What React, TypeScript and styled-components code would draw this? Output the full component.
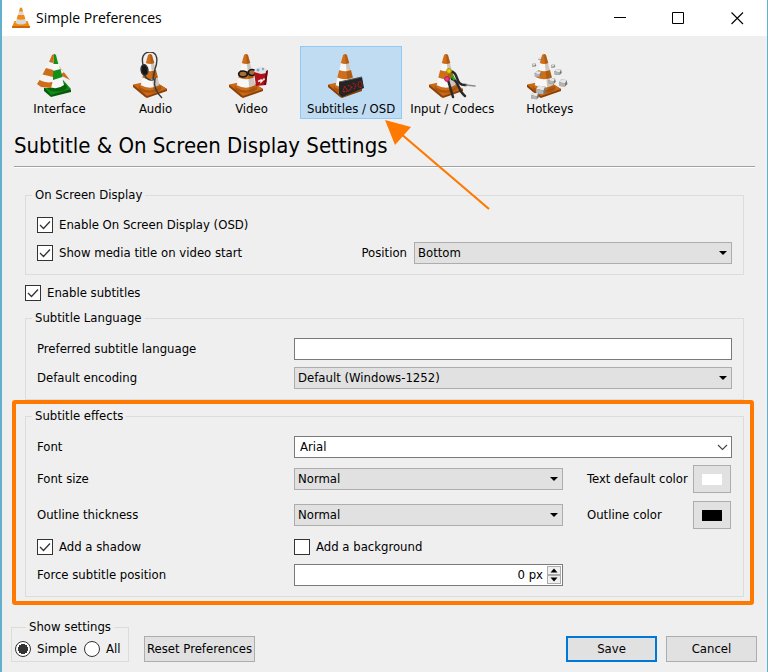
import React, { useState } from 'react';
import styled, { createGlobalStyle, css } from 'styled-components';

const UI_FONT = '"DejaVu Sans Condensed", "DejaVu Sans", Tahoma, sans-serif';
const HIGHLIGHT = '#ff7800';

const GlobalStyle = createGlobalStyle`
  *, *::before, *::after { box-sizing: border-box; }
  body {
    margin: 0;
    background: #efefef;
    color: #000;
    font-family: ${UI_FONT};
    font-size: 13px;
    line-height: 18px;
  }
  button, input, select { font: inherit; color: inherit; margin: 0; }
`;

const Window = styled.main`
  display: flex;
  flex-direction: column;
  min-height: 100vh;
  background: #efefef;
  border-left: 2px solid #62b0cb;
  border-right: 1px solid #62b0cb;
`;

const TitleBar = styled.header`
  display: flex;
  align-items: center;
  height: 36px;
  padding-left: 9px;
  background: #fff;
`;

const WindowTitle = styled.span`
  flex: 1;
  margin-left: 5px;
  font-family: 'Open Sans', 'Noto Sans', sans-serif;
  font-size: 14px;
  line-height: 20px;
`;

const CaptionButton = styled.button`
  display: flex;
  align-items: center;
  justify-content: center;
  width: 59px;
  height: 34px;
  padding: 0;
  border: 0;
  background: transparent;
`;

const Tabs = styled.nav`
  display: flex;
  gap: 1px;
  margin: 10px 10px 0;
`;

const TabSlot = styled.div`
  position: relative;
`;

const Tab = styled.button<{ $active?: boolean }>`
  display: flex;
  flex-direction: column;
  align-items: center;
  min-width: 95px;
  height: 73px;
  padding: 5px 6px 0;
  border: 1px solid transparent;
  background: transparent;
  line-height: 17px;
  white-space: nowrap;
  ${(p) => p.$active && css`
    background: #c0dcf3;
    border-color: #90c8f6;
  `}
`;

const Pointer = styled.svg`
  position: absolute;
  left: 80px;
  top: 70px;
  z-index: 2;
  pointer-events: none;
`;

const Heading = styled.h1`
  margin: 10px 12px 0;
  padding-bottom: 3px;
  border-bottom: 1px solid #a0a0a0;
  box-shadow: 0 1px 0 #fff;
  font-size: 22px;
  font-weight: 400;
  line-height: 34px;
`;

const Panel = styled.section`
  padding: 0 23px;
`;

const Group = styled.fieldset<{ $top?: number }>`
  min-width: 0;
  margin: 0;
  padding: ${(p) => p.$top ?? 11}px 11px 10px;
  border: 1px solid #dcdcdc;
`;

const Legend = styled.legend`
  margin-left: -5px;
  padding: 0 3px;
  line-height: 18px;
`;

const OsdGroup = styled(Group)`
  margin-top: 19px;
`;

const Rows = styled.div<{ $gap: number }>`
  display: flex;
  flex-direction: column;
  gap: ${(p) => p.$gap}px;
`;

const Row = styled.div`
  display: flex;
  align-items: center;
  justify-content: space-between;
  min-height: 22px;
`;

const FormRow = styled.div<{ $tall?: boolean }>`
  display: grid;
  grid-template-columns: 257px minmax(0, 1fr);
  align-items: center;
  min-height: ${(p) => (p.$tall ? 30 : 22)}px;
`;

const EffectRow = styled(FormRow)`
  grid-template-columns: 257px minmax(0, 1fr) 24px 106px 39px;
`;

const ColorLabel = styled.span`
  grid-column: 4;
  white-space: nowrap;
`;

const CheckLabel = styled.label`
  display: inline-flex;
  align-items: center;
  gap: 6px;
  min-height: 22px;
  white-space: nowrap;
`;

const SubtitlesToggle = styled.div`
  display: flex;
  padding: 7px 0 5px;
`;

const TickWrap = styled.span`
  display: grid;
  width: 16px;
  height: 16px;
  & > * { grid-area: 1 / 1; }
  svg { pointer-events: none; }
  input:not(:checked) + svg { visibility: hidden; }
`;

const Tick = styled.input`
  appearance: none;
  width: 16px;
  height: 16px;
  border: 1px solid #333;
  background: #fff;
`;

const Radio = styled.input`
  appearance: none;
  width: 16px;
  height: 16px;
  border: 1px solid #333;
  border-radius: 50%;
  background: #fff;
  &:checked { background: radial-gradient(circle, #333 0 5px, #fff 5px); }
`;

const PositionField = styled.label`
  display: flex;
  align-items: center;
  gap: 7px;
`;

const SelectWrap = styled.span<{ $width?: string }>`
  display: grid;
  align-items: center;
  width: ${(p) => p.$width ?? '100%'};
  & > * { grid-area: 1 / 1; }
  svg {
    justify-self: end;
    margin-right: 4px;
    pointer-events: none;
  }
`;

const Drop = styled.select<{ $light?: boolean }>`
  appearance: none;
  width: 100%;
  height: 22px;
  padding: 0 20px 0 ${(p) => (p.$light ? 5 : 3)}px;
  border: 1px solid ${(p) => (p.$light ? '#7a7a7a' : '#adadad')};
  border-radius: 0;
  background: ${(p) => (p.$light ? '#fff' : '#e1e1e1')};
`;

const TextInput = styled.input`
  width: 100%;
  height: 22px;
  padding: 0 4px;
  border: 1px solid #7a7a7a;
  background: #fff;
`;

const Spin = styled.div`
  display: flex;
  height: 22px;
  padding: 1px;
  border: 1px solid #7a7a7a;
  background: #fff;
`;

const SpinInput = styled.input`
  flex: 1;
  min-width: 0;
  padding: 0 4px;
  border: 0;
  background: transparent;
  text-align: right;
`;

const SpinButtons = styled.div`
  display: grid;
  grid-template-rows: 1fr 1fr;
  width: 14px;
`;

const SpinButton = styled.button`
  display: flex;
  align-items: center;
  justify-content: center;
  padding: 0;
  border: 1px solid #adadad;
  background: #f0f0f0;
`;

const Highlight = styled.div`
  margin: 0 13px 0 10px;
  padding: 3px 6px 4px 9px;
  border: 4px solid ${HIGHLIGHT};
  border-radius: 3px;
`;

const PushButton = styled.button<{ $primary?: boolean }>`
  height: 26px;
  min-width: 91px;
  padding: 0 2px;
  border: ${(p) => (p.$primary ? '2px solid #0078d7' : '1px solid #adadad')};
  background: #e1e1e1;
  white-space: nowrap;
`;

const ColorButton = styled.button`
  grid-column: 5;
  display: flex;
  align-items: center;
  justify-content: center;
  width: 38px;
  height: 28px;
  padding: 0;
  border: 1px solid #adadad;
  background: #e1e1e1;
`;

const Swatch = styled.span<{ $color: string }>`
  width: 20px;
  height: 11px;
  background: ${(p) => p.$color};
`;

const Footer = styled.footer`
  display: flex;
  align-items: flex-end;
  gap: 9px;
  padding: 13px 10px 10px 9px;
`;

const ShowGroup = styled.fieldset`
  min-width: 118px;
  margin: 0 6px 0 0;
  padding: 2px 3px 1px;
  border: 1px solid #dcdcdc;
`;

const ShowLegend = styled.legend`
  margin: 0 auto;
  padding: 0 3px;
  line-height: 18px;
`;

const RadioRow = styled.div`
  display: flex;
  gap: 7px;
`;

const Spacer = styled.div`
  flex: 1;
`;

const STRIPE = '#cf6e1a';

function ConeBase() {
  return (
    <>
      <path d="M1 33 L22 29 L35 37 V39 L15 46 L13 45 L1 35Z" fill="#8a4109" />
      <path d="M1 32.5 L21 28.5 L35 37 L15 44Z" fill="#cb6a14" />
      <ellipse cx="18" cy="36" rx="11.5" ry="4.8" fill="#9c4c0c" opacity="0.7" />
    </>
  );
}

function ConeBody() {
  return (
    <>
      <path d="M16 3 Q18 1 20 3 L27.5 34 Q18 40 8.5 34Z" fill="#f7f7f7" />
      <path d="M16 3 Q18 1 20 3 L22.3 11 Q18 13 13.8 11Z" fill={STRIPE} />
      <path d="M12.2 18 Q18 20.5 24 18 L26 25.5 Q18 29 10.3 25.5Z" fill={STRIPE} />
      <path d="M8.6 33 Q18 38.5 27.4 33 L28 35.5 Q18 41.5 8 35.5Z" fill={STRIPE} />
      <path d="M18 2 Q19.5 2 20 3 L28 35.5 Q25 38 21.5 38.8Z" fill="#4a2404" opacity="0.24" />
    </>
  );
}

const KEYS: [number, number, number][] = [
  [8, 13, 0.5], [14, 7, 0.35], [27, 14, 0.5], [32, 20, 0.85], [12, 22, 0.8],
  [26, 29, 0.85], [37, 31, 1], [15, 38, 1.2], [9, 44, 0.9],
];

function TabIcon({ kind }: { kind: string }) {
  return (
    <svg width="48" height="48" viewBox="0 0 48 48" aria-hidden="true">
      {kind === 'interface' ? (
        <>
          <path d="M23 14 L34 28 L26 24Z" fill={STRIPE} />
          <path d="M23 15 L28 20 L25 22Z" fill="#fff" />
          <path d="M8 36 L27 29 L35 38 V40 L15 45 L8 39Z" fill="#08590b" />
          <path d="M8 35 L27 28 L35 37 L15 43Z" fill="#108a16" />
          <ellipse cx="21" cy="35" rx="10" ry="4.5" fill="#08650b" />
          <path d="M17 3 Q18 1 20 3 L28 33 Q22 38 13 35Z" fill="#f7f7f7" />
          <path d="M17 3 Q18 1 20 3 L22.3 12 H16Z" fill="#129018" />
          <path d="M17 19 L24.5 17 L26.5 25 L17 28Z" fill="#129018" />
          <path d="M16 3 Q17 2 18 3 L16 35 Q8 38 1 32Z" fill="#f4f4f4" />
          <path d="M16 3 Q17 2 18 3 L17.5 11 L13 10Z" fill={STRIPE} />
          <path d="M10 16 L17.3 18 L17 25 L6.5 22.5Z" fill={STRIPE} />
          <path d="M3.5 28 Q10 31.5 16.5 30 L15 36 L5 35 L1 32Z" fill={STRIPE} />
        </>
      ) : (
        <>
          <ConeBase />
          <ConeBody />
        </>
      )}
      {kind === 'audio' && (
        <g fill="none" stroke="#3a3a3a" strokeWidth="1.4">
          <path d="M12 16 C8 5 12 0 18 0 C26 0 26 9 23 17 L21 27" />
          <path d="M12 18 C11 26 18 30 23 27 C21 35 26 42 30 46" />
          <ellipse cx="12.5" cy="18" rx="3.4" ry="5.3" fill="#161616" stroke="#333" transform="rotate(-8 12 18)" />
        </g>
      )}
      {kind === 'video' && (
        <>
          <g fill="#a2703a" stroke="#151515" strokeWidth="1.7">
            <ellipse cx="15" cy="22" rx="4.3" ry="3" />
            <ellipse cx="24" cy="20.5" rx="3.6" ry="3" />
          </g>
          <path d="M26 20 L40 18 L38 33 L28 34Z" fill="#b01017" />
          <path d="M26 20 L27 17 L31 15 L36 15 L40 18 L39 21 L33 22Z" fill="#dde5ea" />
          <circle cx="30" cy="18" r="1.5" fill="#8fa6b3" />
          <circle cx="35" cy="17" r="1.2" fill="#8fa6b3" />
          <path d="M30 29.5 L33 28 V30 L36 27 L38 28.5" stroke="#eee" strokeWidth="1.4" fill="none" />
          <path d="M38 19 L40 18 L38 33 L36 33Z" fill="#6e0a0e" />
        </>
      )}
      {kind === 'subtitles' && (
        <>
          <path d="M12 30 L35 25 L37 36 L15 45 L12 42Z" fill="#242424" />
          <path d="M12 30 L35 25" stroke="#555" strokeWidth="1" />
          <g fill="none" stroke="#b81c22" strokeWidth="1.2" strokeDasharray="1.4 0.8">
            <path d="M16 40 L17.5 34 L21 39Z" />
            <path d="M21 33 L25 35 L22 39" />
            <path d="M26 31 L29 33.5 L27 37" />
            <ellipse cx="33" cy="32.5" rx="1.9" ry="3" />
          </g>
        </>
      )}
      {kind === 'codecs' && (
        <g fill="none" strokeLinecap="round">
          <g stroke="#292929" strokeWidth="2.5">
            <path d="M22 19 C32 20 26 34 38 33" />
            <path d="M24 27 C31 28 29 38 37 44" />
            <path d="M20 28 Q22 35 25 45" />
          </g>
          <path d="M38 33 L47 34" stroke="#8a8a8a" strokeWidth="1.5" />
          <path d="M24 24 L26 27" stroke="#2aa523" strokeWidth="2.5" />
          <circle cx="21" cy="19" r="2.4" fill="#ead300" stroke="#a79300" />
          <circle cx="19" cy="27" r="2.4" fill="#ee3d7c" stroke="#a8204e" />
        </g>
      )}
      {kind === 'hotkeys' &&
        KEYS.map(([x, y, s]) => (
          <g key={`${x}-${y}`} transform={`translate(${x} ${y}) scale(${s})`}>
            <path d="M-4 -1 L-2 -3.5 L3.5 -3 L4.5 1 L2 3.5 L-4 3Z" fill="#777" />
            <path d="M-4 -1 L-2 -3.5 L3.5 -3 L2 0.5Z" fill="#e6e6e6" />
            <path d="M-4 -1 L2 0.5 L2 3.5 L-4 3Z" fill="#b4b4b4" />
          </g>
        ))}
    </svg>
  );
}

function AppIcon() {
  return (
    <svg width="20" height="22" viewBox="0 0 20 22" aria-hidden="true">
      <path d="M3.5 14 H16.5 L19 20 Q19 21 18 21 H2 Q1 21 1 20Z" fill="#f08a12" />
      <path d="M1 19 H19 V20 Q19 21 18 21 H2 Q1 21 1 20Z" fill="#cf6606" />
      <path d="M9 1 Q10 0 11 1 L15.5 16 Q10 19 4.5 16Z" fill="#d9d9d9" />
      <path d="M9 1 Q10 0 11 1 L12 4.5 H8Z" fill="#f08a12" />
      <path d="M6.9 8 H13.1 L14.3 12 Q10 13.5 5.7 12Z" fill="#f08a12" />
    </svg>
  );
}

const Arrow = () => (
  <svg width="10" height="6" viewBox="0 0 10 6" aria-hidden="true">
    <path d="M1 1 H9 L5 5Z" fill="#000" />
  </svg>
);

function Check({ label, on = false }: { label: string; on?: boolean }) {
  return (
    <CheckLabel>
      <TickWrap>
        <Tick type="checkbox" defaultChecked={on} />
        <svg width="16" height="16" viewBox="0 0 16 16" aria-hidden="true">
          <path d="M3 8 L6.5 11.5 L13 4.5" fill="none" stroke="#333" strokeWidth="1.3" />
        </svg>
      </TickWrap>
      {label}
    </CheckLabel>
  );
}

function Combo({ id, value, width, light }: { id: string; value: string; width?: string; light?: boolean }) {
  return (
    <SelectWrap $width={width}>
      <Drop id={id} defaultValue={value} $light={light}>
        <option>{value}</option>
      </Drop>
      {light ? (
        <svg width="11" height="7" viewBox="0 0 11 7" aria-hidden="true">
          <path d="M1 1 L5.5 5.5 L10 1" fill="none" stroke="#444" strokeWidth="1.1" />
        </svg>
      ) : (
        <Arrow />
      )}
    </SelectWrap>
  );
}

const TABS = [
  { kind: 'interface', label: 'Interface' },
  { kind: 'audio', label: 'Audio' },
  { kind: 'video', label: 'Video' },
  { kind: 'subtitles', label: 'Subtitles / OSD' },
  { kind: 'codecs', label: 'Input / Codecs' },
  { kind: 'hotkeys', label: 'Hotkeys' },
];

export default function App() {
  const [offset, setOffset] = useState(0);
  return (
    <>
      <GlobalStyle />
      <Window>
        <TitleBar>
          <AppIcon />
          <WindowTitle>Simple Preferences</WindowTitle>
          <CaptionButton aria-label="Minimize">
            <svg width="13" height="13" viewBox="0 0 13 13"><path d="M1 5.5 H13" stroke="#000" /></svg>
          </CaptionButton>
          <CaptionButton aria-label="Maximize">
            <svg width="13" height="13" viewBox="0 0 13 13"><path d="M0.5 0.5 H11.5 V11.5 H0.5Z" fill="none" stroke="#000" /></svg>
          </CaptionButton>
          <CaptionButton aria-label="Close">
            <svg width="13" height="13" viewBox="0 0 13 13"><path d="M0.5 0.5 L12 12 M12 0.5 L0.5 12" stroke="#000" strokeWidth="1.1" /></svg>
          </CaptionButton>
        </TitleBar>

        <Tabs>
          {TABS.map((t) => (
            <TabSlot key={t.kind}>
              <Tab $active={t.kind === 'subtitles'}>
                <TabIcon kind={t.kind} />
                {t.label}
              </Tab>
              {t.kind === 'subtitles' && (
                <Pointer width="115" height="100" viewBox="0 0 115 100" aria-hidden="true">
                  <path d="M20 17 L109 93" stroke={HIGHLIGHT} strokeWidth="2.2" />
                  <path d="M5 4 L31 11 L15 29Z" fill={HIGHLIGHT} />
                </Pointer>
              )}
            </TabSlot>
          ))}
        </Tabs>

        <Heading>Subtitle &amp; On Screen Display Settings</Heading>

        <Panel>
          <OsdGroup $top={10}>
            <Legend>On Screen Display</Legend>
            <Rows $gap={6}>
              <Row><Check label="Enable On Screen Display (OSD)" on /></Row>
              <Row>
                <Check label="Show media title on video start" on />
                <PositionField htmlFor="position">
                  Position
                  <Combo id="position" value="Bottom" width="318px" />
                </PositionField>
              </Row>
            </Rows>
          </OsdGroup>

          <SubtitlesToggle><Check label="Enable subtitles" on /></SubtitlesToggle>

          <Group>
            <Legend>Subtitle Language</Legend>
            <Rows $gap={7}>
              <FormRow>
                <label htmlFor="language">Preferred subtitle language</label>
                <TextInput id="language" type="text" />
              </FormRow>
              <FormRow>
                <label htmlFor="encoding">Default encoding</label>
                <Combo id="encoding" value="Default (Windows-1252)" />
              </FormRow>
            </Rows>
          </Group>
        </Panel>

        <Highlight>
          <Group>
            <Legend>Subtitle effects</Legend>
            <Rows $gap={6}>
              <FormRow>
                <label htmlFor="font">Font</label>
                <Combo id="font" value="Arial" light />
              </FormRow>
              <EffectRow $tall>
                <label htmlFor="font-size">Font size</label>
                <Combo id="font-size" value="Normal" />
                <ColorLabel id="text-color">Text default color</ColorLabel>
                <ColorButton aria-labelledby="text-color"><Swatch $color="#fff" /></ColorButton>
              </EffectRow>
              <EffectRow $tall>
                <label htmlFor="outline">Outline thickness</label>
                <Combo id="outline" value="Normal" />
                <ColorLabel id="outline-color">Outline color</ColorLabel>
                <ColorButton aria-labelledby="outline-color"><Swatch $color="#000" /></ColorButton>
              </EffectRow>
              <EffectRow>
                <Check label="Add a shadow" on />
                <Check label="Add a background" />
              </EffectRow>
              <EffectRow>
                <label htmlFor="force">Force subtitle position</label>
                <Spin>
                  <SpinInput id="force" type="text" value={`${offset} px`} readOnly />
                  <SpinButtons>
                    <SpinButton aria-label="Increase" onClick={() => setOffset(offset + 1)}>
                      <svg width="8" height="5" viewBox="0 0 8 5"><path d="M0.5 4.5 L4 0.5 L7.5 4.5Z" /></svg>
                    </SpinButton>
                    <SpinButton aria-label="Decrease" onClick={() => setOffset(offset - 1)}>
                      <svg width="8" height="5" viewBox="0 0 8 5"><path d="M0.5 0.5 L4 4.5 L7.5 0.5Z" /></svg>
                    </SpinButton>
                  </SpinButtons>
                </Spin>
              </EffectRow>
            </Rows>
          </Group>
        </Highlight>

        <Footer>
          <ShowGroup>
            <ShowLegend>Show settings</ShowLegend>
            <RadioRow>
              <CheckLabel><Radio type="radio" name="show" defaultChecked />Simple</CheckLabel>
              <CheckLabel><Radio type="radio" name="show" />All</CheckLabel>
            </RadioRow>
          </ShowGroup>
          <PushButton>Reset Preferences</PushButton>
          <Spacer />
          <PushButton $primary>Save</PushButton>
          <PushButton>Cancel</PushButton>
        </Footer>
      </Window>
    </>
  );
}
